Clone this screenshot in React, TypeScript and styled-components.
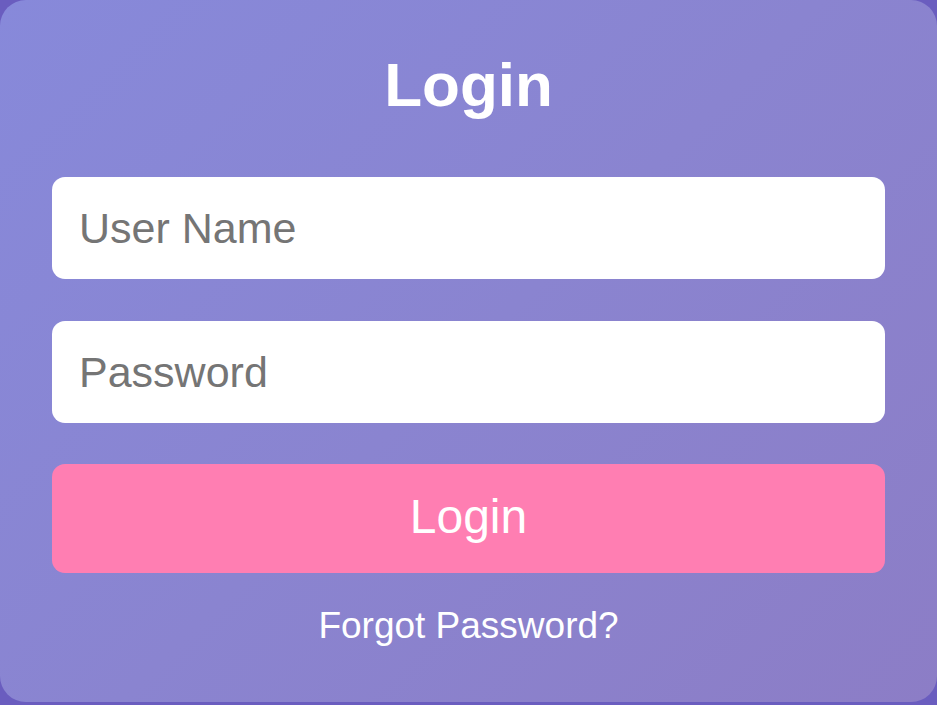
import React from 'react';
import styled, { createGlobalStyle } from 'styled-components';

const GlobalStyle = createGlobalStyle`
    html, body {
        margin: 0;
        padding: 0;
        background: #6a5dbf;
    }
    #root {
        height: 705px;
    }
`;

const Card = styled.form`
    box-sizing: border-box;
    width: 937px;
    height: 702px;
    padding: 49px 52px 0;
    border-radius: 26px;
    background: linear-gradient(135deg, #8789da 0%, #8a84d0 50%, #8c7dc6 100%);
    display: flex;
    flex-direction: column;
    align-items: stretch;
    font-family: "Liberation Sans", Arial, sans-serif;
`;

const Title = styled.h1`
    margin: 0 0 57px;
    font-size: 62px;
    line-height: 71px;
    font-weight: 700;
    color: #ffffff;
    text-align: center;
`;

const Field = styled.input`
    box-sizing: border-box;
    height: 102px;
    margin: 0 0 42px;
    padding: 0 27px;
    border: none;
    border-radius: 13px;
    background: #ffffff;
    font-family: inherit;
    font-size: 43px;
    color: #333;
    outline: none;
    &::placeholder {
        color: #757575;
    }
`;

const Button = styled.button`
    height: 109px;
    margin: -1px 0 0;
    padding: 0 0 4px;
    border: none;
    border-radius: 13px;
    background: #ff7eb2;
    color: #ffffff;
    font-family: inherit;
    font-size: 48px;
    cursor: pointer;
`;

const Forgot = styled.a`
    margin-top: 32px;
    font-size: 37px;
    line-height: 42px;
    color: #ffffff;
    text-align: center;
    text-decoration: none;
    cursor: pointer;
`;

export default function App() {
    return (
        <>
            <GlobalStyle />
            <Card onSubmit={(e) => e.preventDefault()}>
                <Title>Login</Title>
                <Field type="text" placeholder="User Name" />
                <Field type="password" placeholder="Password" />
                <Button type="submit">Login</Button>
                <Forgot>Forgot Password?</Forgot>
            </Card>
        </>
    );
}
